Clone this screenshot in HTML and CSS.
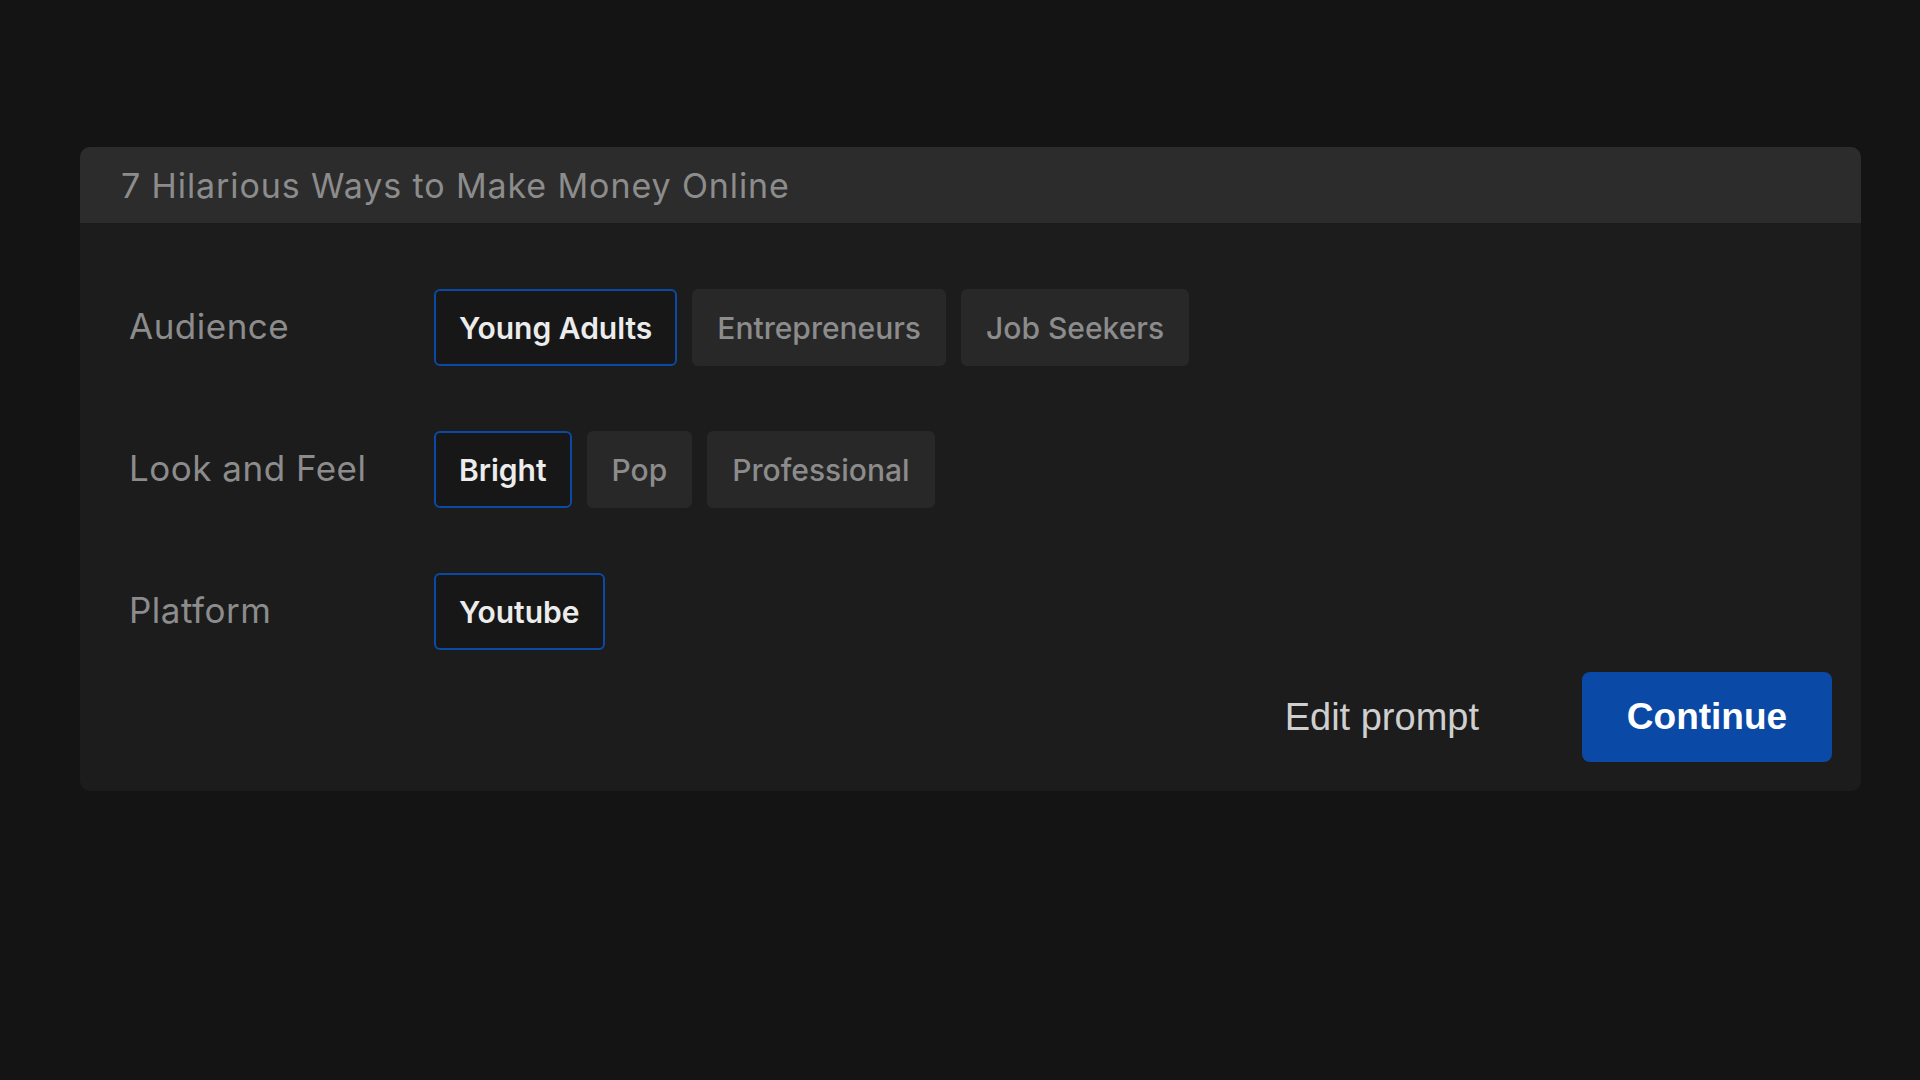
FILE: index.html
```html
<!DOCTYPE html>
<html lang="en">
<head>
    <meta charset="UTF-8">
    <meta name="viewport" content="width=device-width, initial-scale=1.0">
    <title>Prompt Options</title>
    <link rel="stylesheet" href="styles.css">
</head>
<body>
    <div class="card">
        <div class="card-header">
            <h2>7 Hilarious Ways to Make Money Online</h2>
        </div>

        <div class="card-body">
            <div class="options">
                <div class="option-label">Audience</div>
                <div class="chips">
                    <button type="button" class="chip selected">Young Adults</button>
                    <button type="button" class="chip">Entrepreneurs</button>
                    <button type="button" class="chip">Job Seekers</button>
                </div>

                <div class="option-label">Look and Feel</div>
                <div class="chips">
                    <button type="button" class="chip selected">Bright</button>
                    <button type="button" class="chip">Pop</button>
                    <button type="button" class="chip">Professional</button>
                </div>

                <div class="option-label">Platform</div>
                <div class="chips">
                    <button type="button" class="chip selected">Youtube</button>
                </div>
            </div>

            <div class="actions">
                <button type="button" class="btn btn-link">Edit prompt</button>
                <button type="button" class="btn btn-primary">Continue</button>
            </div>
        </div>
    </div>
</body>
</html>
```

FILE: styles.css
```css
:root {
    --page-bg: #141414;
    --card-bg: #1c1c1c;
    --header-bg: #2c2c2c;
    --chip-bg: #282828;
    --muted: #8c8c8c;
    --primary: #0a4aa6;
    --radius: 10px;
}

* {
    margin: 0;
    padding: 0;
    box-sizing: border-box;
}

body {
    font-family: Inter, "Noto Sans", sans-serif;
    background-color: var(--page-bg);
    color: #e6e6e6;
    padding: 147px 59px 0 80px;
}

.card {
    background-color: var(--card-bg);
    border-radius: var(--radius);
    overflow: hidden;
}

.card-header {
    background-color: var(--header-bg);
    height: 76px;
    display: flex;
    align-items: center;
    padding: 0 41px;
}

.card-header h2 {
    font-size: 34px;
    font-weight: 400;
    letter-spacing: 0.9px;
    color: var(--muted);
}

.card-body {
    padding: 66px 29px 29px 49px;
}

.options {
    display: grid;
    grid-template-columns: 305px 1fr;
    grid-auto-rows: 77px;
    row-gap: 65px;
    align-items: center;
}

.option-label {
    font-size: 35px;
    letter-spacing: 0.5px;
    color: var(--muted);
    margin-top: -4px;
}

.chips {
    display: flex;
    gap: 15px;
    height: 100%;
}

.chip {
    font-family: inherit;
    font-size: 30px;
    font-weight: 500;
    color: var(--muted);
    background-color: var(--chip-bg);
    border: 2px solid transparent;
    border-radius: 6px;
    padding: 0 23px;
    height: 100%;
    cursor: pointer;
}

.chip.selected {
    background-color: #171717;
    border-color: var(--primary);
    color: #ececec;
    font-weight: 600;
}

.actions {
    display: flex;
    justify-content: flex-end;
    align-items: center;
    gap: 103px;
    margin-top: 22px;
}

.btn {
    font-family: "Liberation Sans", Arial, sans-serif;
    border: none;
    cursor: pointer;
}

.btn-link {
    background: none;
    color: #cfcfcf;
    font-size: 38px;
}

.btn-primary {
    background-color: var(--primary);
    color: white;
    font-size: 37px;
    font-weight: 700;
    width: 250px;
    height: 90px;
    border-radius: 8px;
}
```
